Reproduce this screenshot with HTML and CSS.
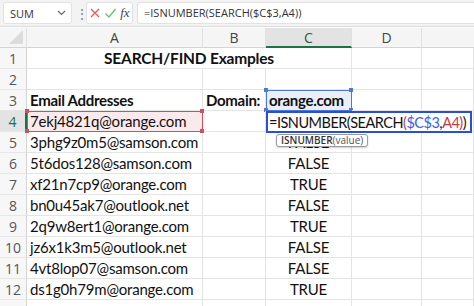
FILE: index.html
```html
<!DOCTYPE html>
<html lang="en">
  <head>
    <meta charset="UTF-8" />
    <title>SEARCH/FIND Examples</title>
    <link rel="stylesheet" href="styles.css">
  </head>
  <body>
    <div class="toolbar">
      <div class="namebox">
        <span>SUM</span>
        <svg class="chev" width="9" height="6" viewBox="0 0 9 6"><path d="M1 1l3.5 3.5L8 1" fill="none" stroke="#666" stroke-width="1.2"/></svg>
      </div>
      <div class="dots">⋮</div>
      <div class="fxbox">
        <svg width="12" height="12" viewBox="0 0 12 12"><path d="M2 2l8 8M10 2l-8 8" stroke="#e05a5a" stroke-width="1.3"/></svg>
        <svg width="13" height="12" viewBox="0 0 13 12"><path d="M1.5 6.5l3.5 3.5 6.5-8" fill="none" stroke="#6bbf6b" stroke-width="1.3"/></svg>
        <span class="fx">fx</span>
      </div>
      <div class="formula">=ISNUMBER(SEARCH($C$3,A4))</div>
    </div>

    <div class="sheet">
      <!-- column headers -->
      <div class="hd corner"><span class="tri"></span></div>
      <div class="hd">A</div>
      <div class="hd">B</div>
      <div class="hd sel">C</div>
      <div class="hd">D</div>
      <div class="hd last"></div>

      <div class="rh">1</div>
      <div class="c title">SEARCH/FIND Examples</div>
      <div class="c"></div><div class="c"></div>

      <div class="rh">2</div>
      <div class="c"></div><div class="c"></div><div class="c"></div><div class="c"></div><div class="c"></div>

      <div class="rh">3</div>
      <div class="c b">Email Addresses</div>
      <div class="c b">Domain:</div>
      <div class="c b ref-blue">orange.com<i class="k tl"></i><i class="k tr"></i><i class="k bl"></i><i class="k br"></i></div>
      <div class="c"></div><div class="c"></div>

      <div class="rh active">4</div>
      <div class="c ref-red">7ekj4821q@orange.com<i class="k tl"></i><i class="k tr"></i><i class="k bl"></i><i class="k br"></i></div>
      <div class="c"></div>
      <div class="c edit-host">
        <div class="edit">=ISNUMBER(SEARCH<span class="r">(</span><span class="bl">$C$3</span>,<span class="r">A4)</span>)</div>
        <div class="tip"><b>ISNUMBER</b>(value)</div>
      </div>
      <div class="c"></div><div class="c"></div>

      <div class="rh">5</div>
      <div class="c">3phg9z0m5@samson.com</div><div class="c"></div><div class="c mid">FALSE</div><div class="c"></div><div class="c"></div>
      <div class="rh">6</div>
      <div class="c">5t6dos128@samson.com</div><div class="c"></div><div class="c mid">FALSE</div><div class="c"></div><div class="c"></div>
      <div class="rh">7</div>
      <div class="c">xf21n7cp9@orange.com</div><div class="c"></div><div class="c mid">TRUE</div><div class="c"></div><div class="c"></div>
      <div class="rh">8</div>
      <div class="c">bn0u45ak7@outlook.net</div><div class="c"></div><div class="c mid">FALSE</div><div class="c"></div><div class="c"></div>
      <div class="rh">9</div>
      <div class="c">2q9w8ert1@orange.com</div><div class="c"></div><div class="c mid">TRUE</div><div class="c"></div><div class="c"></div>
      <div class="rh">10</div>
      <div class="c">jz6x1k3m5@outlook.net</div><div class="c"></div><div class="c mid">FALSE</div><div class="c"></div><div class="c"></div>
      <div class="rh">11</div>
      <div class="c">4vt8lop07@samson.com</div><div class="c"></div><div class="c mid">FALSE</div><div class="c"></div><div class="c"></div>
      <div class="rh">12</div>
      <div class="c">ds1g0h79m@orange.com</div><div class="c"></div><div class="c mid">TRUE</div><div class="c"></div><div class="c"></div>
      <div class="rh">13</div>
      <div class="c"></div><div class="c"></div><div class="c"></div><div class="c"></div><div class="c"></div>
    </div>
  </body>
</html>
```

FILE: styles.css
```css
body {
  margin: 0;
  width: 474px;
  height: 306px;
  overflow: hidden;
  background: #fff;
  font-family: "Lato", "Liberation Sans", sans-serif;
  color: #111;
}

/* formula bar */
.toolbar {
  height: 26px;
  display: flex;
  align-items: center;
  gap: 4px;
  padding: 0 0 0 3px;
  background: #f3f3f3;
  border-bottom: 1px solid #dcdcdc;
  font-family: "Open Sans", "Liberation Sans", sans-serif;
  font-size: 11px;
  color: #333;
  overflow: hidden;
}

.namebox {
  width: 56px;
  height: 20px;
  flex: none;
  background: #fff;
  border: 1px solid #e2e2e2;
  border-radius: 3px;
  display: flex;
  align-items: center;
  justify-content: space-between;
  padding: 0 5px 0 6px;
}

.dots {
  color: #777;
  font-size: 12px;
  width: 6px;
  text-align: center;
}

.fxbox {
  width: 43px;
  height: 20px;
  flex: none;
  background: #fff;
  border: 1px solid #e2e2e2;
  border-radius: 3px;
  display: flex;
  align-items: center;
  justify-content: space-around;
  padding: 0 1px;
}

.fx {
  font-family: "Liberation Serif", serif;
  font-style: italic;
  font-size: 13px;
  color: #444;
}

.formula {
  flex: 1;
  height: 20px;
  line-height: 20px;
  background: #fff;
  border: 1px solid #e2e2e2;
  border-right: none;
  border-radius: 3px 0 0 3px;
  padding-left: 6px;
}

/* grid */
.sheet {
  display: grid;
  grid-template-columns: 27px 176px 63px 86px 70px 1fr;
  grid-template-rows: 20px;
  grid-auto-rows: 21px;
  margin-top: 1px;
}

.hd {
  background: #f5f5f5;
  border-right: 1px solid #e0e0e0;
  border-bottom: 1px solid #d4d4d4;
  font-family: "Open Sans", "Liberation Sans", sans-serif;
  font-size: 14px;
  color: #444;
  display: flex;
  align-items: center;
  justify-content: center;
}

.hd.sel {
  background: #e3e3e3;
  border-bottom: 2px solid #1e7145;
  color: #2d5c3c;
}

.hd.last {
  border-right: none;
}

.corner {
  position: relative;
}

.tri {
  position: absolute;
  right: 3px;
  bottom: 3px;
  border-left: 14px solid transparent;
  border-bottom: 14px solid #dcdcdc;
}

.rh {
  background: #f7f7f7;
  border-right: 1px solid #d4d4d4;
  border-bottom: 1px solid #e6e6e6;
  font-family: "Open Sans", "Liberation Sans", sans-serif;
  font-size: 14px;
  color: #555;
  display: flex;
  align-items: center;
  justify-content: center;
}

.rh.active {
  background: #e3e3e3;
  color: #1e7145;
  border-right: 2px solid #1e7145;
}

.c {
  border-right: 1px solid #e4e4e4;
  border-bottom: 1px solid #e4e4e4;
  font-size: 15px;
  letter-spacing: -0.2px;
  line-height: 20px;
  padding: 0 3px;
  white-space: nowrap;
  position: relative;
}

.b {
  font-weight: bold;
  letter-spacing: -0.3px;
}

.title {
  grid-column: span 3;
  font-weight: bold;
  font-size: 15.5px;
  letter-spacing: -0.2px;
  text-align: center;
}

.mid {
  text-align: center;
}

/* range reference highlights */
.ref-blue {
  background: #e9eef9;
  outline: 1px solid #4f78d4;
  outline-offset: -1px;
}

.ref-red {
  background: #fbeaeb;
  outline: 1px solid #c9545f;
  outline-offset: -1px;
  z-index: 1;
}

.k {
  position: absolute;
  width: 4px;
  height: 4px;
}

.ref-blue .k { background: #4f78d4; }
.ref-red .k { background: #c9545f; }

.k.tl { left: -2px; top: -2px; }
.k.tr { right: -2px; top: -2px; }
.k.bl { left: -2px; bottom: -2px; }
.k.br { right: -2px; bottom: -2px; }

/* in-cell edit */
.edit-host {
  z-index: 2;
}

.edit {
  position: absolute;
  left: 0;
  top: 0;
  width: 206px;
  height: 22px;
  box-sizing: border-box;
  background: #fff;
  border: 2px solid #2a4fd6;
  line-height: 19px;
  font-size: 14.5px;
  letter-spacing: -0.5px;
  padding-left: 1px;
}

.edit .r { color: #c33b4a; }
.edit .bl { color: #3a63d8; }

.tip {
  position: absolute;
  left: 10px;
  top: 23px;
  height: 11px;
  padding: 0 4px;
  background: #fff;
  border: 1px solid #9a9a9a;
  border-radius: 3px;
  box-shadow: 0 1px 2px rgba(0, 0, 0, 0.2);
  font-family: "Open Sans", "Liberation Sans", sans-serif;
  font-size: 10px;
  letter-spacing: 0;
  line-height: 11px;
  color: #555;
}

.tip b {
  color: #333;
  font-weight: 600;
}
```
